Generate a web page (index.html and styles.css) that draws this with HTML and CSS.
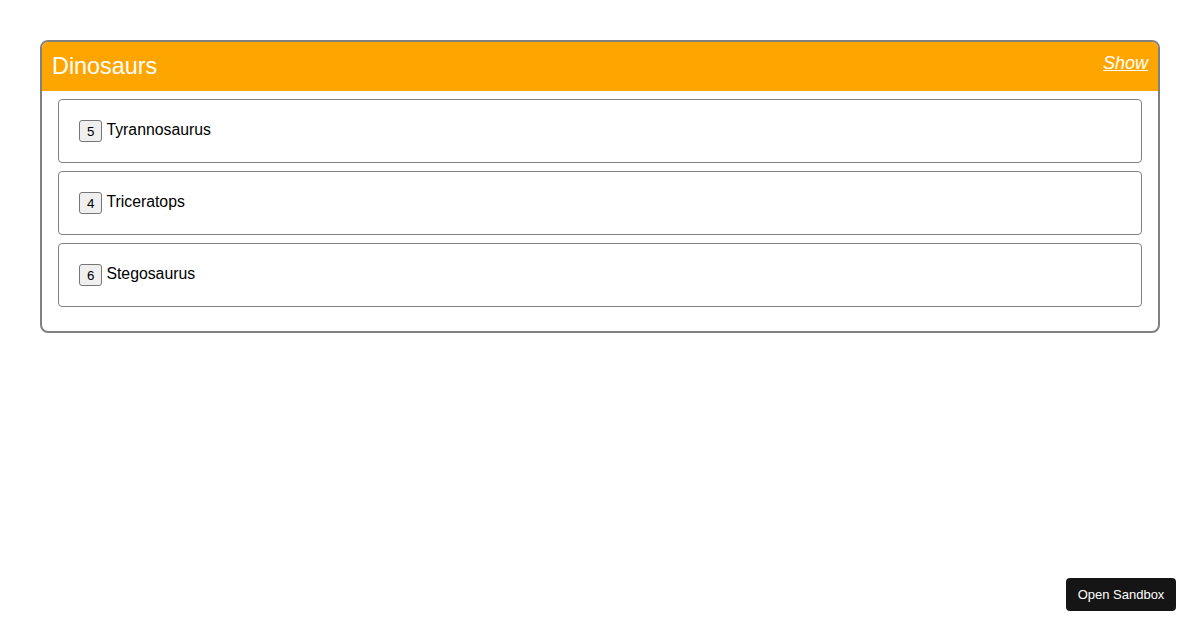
FILE: index.html
```html
<!DOCTYPE html>
<html>
<head>
<meta charset="utf-8">
<link rel="stylesheet" href="styles.css">
</head>
<body>
<div class="panel">
  <div class="panel-header">
    <h1 class="panel-title">Dinosaurs</h1>
    <a class="panel-toggle" href="#">Show</a>
  </div>
  <div class="panel-body">
    <div class="item"><button class="count">5</button><span class="name">Tyrannosaurus</span></div>
    <div class="item"><button class="count">4</button><span class="name">Triceratops</span></div>
    <div class="item"><button class="count">6</button><span class="name">Stegosaurus</span></div>
  </div>
</div>
<button class="sandbox">Open Sandbox</button>
</body>
</html>
```
FILE: styles.css
```css
html, body {
  margin: 0;
  padding: 0;
  background: #fff;
}
body {
  padding: 40px;
  font-family: "Liberation Sans", Arial, sans-serif;
  font-size: 16px;
  color: #000;
}
.panel {
  border: 2px solid #808080;
  border-radius: 8px;
  overflow: hidden;
}
.panel-header {
  background: #ffa500;
  display: flex;
  justify-content: space-between;
  align-items: flex-start;
  padding: 10px 10px 11px 10px;
}
.panel-title {
  margin: 0;
  font-size: 23.4px;
  line-height: 28px;
  font-weight: normal;
  color: #fff;
}
.panel-toggle {
  color: #fff;
  font-style: italic;
  font-size: 18px;
  line-height: 22px;
  text-decoration: underline;
}
.panel-body {
  display: flex;
  flex-direction: column;
  gap: 8px;
  padding: 8px 16px 24px 16px;
}
.item {
  border: 1px solid #808080;
  border-radius: 4px;
  padding: 20px;
  height: 22px;
  display: flex;
  align-items: flex-start;
  gap: 4px;
}
.name {
  font-size: 15.8px;
  line-height: 20px;
}
.count {
  font-family: "Liberation Sans", Arial, sans-serif;
  font-size: 13.33px;
  height: 22px;
  padding: 0 7px;
  background: #efefef;
  border: 1px solid #767676;
  border-radius: 3px;
  color: #000;
}
.sandbox {
  position: fixed;
  right: 24px;
  bottom: 19px;
  background: #151515;
  color: #fff;
  border: none;
  border-radius: 4px;
  font-family: "Liberation Sans", Arial, sans-serif;
  font-size: 13px;
  width: 110px;
  height: 33px;
  padding: 0;
}
```
